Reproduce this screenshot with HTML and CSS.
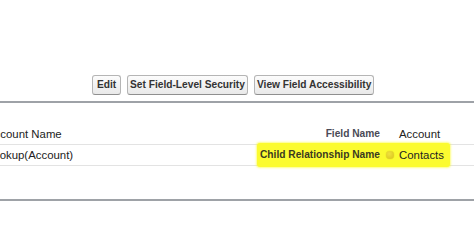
FILE: index.html
```html
<!DOCTYPE html>
<html>
<head>
<meta charset="utf-8">
<link rel="stylesheet" href="styles.css">
</head>
<body>
<div class="page">
  <div class="toolbar">
    <button class="btn">Edit</button>
    <button class="btn">Set Field-Level Security</button>
    <button class="btn">View Field Accessibility</button>
  </div>
  <div class="section">
    <div class="row head">
      <div class="cell left">Account Name</div>
      <div class="cell label">Field Name</div>
      <div class="cell orb-cell"></div>
      <div class="cell value">Account</div>
    </div>
    <div class="row data">
      <span class="highlight"></span>
      <div class="cell left">Lookup(Account)</div>
      <div class="cell label">Child Relationship Name</div>
      <div class="cell orb-cell"><span class="orb"></span></div>
      <div class="cell value">Contacts</div>
    </div>
  </div>
  <div class="bottom-rule"></div>
</div>
</body>
</html>
```
FILE: styles.css
```css
html, body {
  margin: 0;
  padding: 0;
  background: #ffffff;
}
.page {
  width: 474px;
  height: 248px;
  overflow: hidden;
  font-family: "Liberation Sans", Arial, sans-serif;
  color: #222222;
}
.toolbar {
  display: flex;
  gap: 6px;
  padding: 75px 0 0 92px;
  height: 20px;
}
.btn {
  box-sizing: border-box;
  height: 20px;
  min-width: 29px;
  padding: 0 2px;
  margin: 0;
  font-family: "Liberation Sans", Arial, sans-serif;
  font-size: 10.2px;
  font-weight: bold;
  color: #333333;
  line-height: 18px;
  background: linear-gradient(#fcfcfc, #e9e9e9);
  border: 1px solid #b5b5b5;
  border-bottom-color: #8f8f8f;
  border-radius: 3px;
  white-space: nowrap;
}
.section {
  margin-top: 6px;
  border-top: 2px solid #9ea2a7;
  padding-top: 20px;
}
.row {
  position: relative;
  display: flex;
  height: 20px;
  border-bottom: 1px solid #e3e3e3;
  font-size: 11.4px;
  line-height: 20px;
}
.row.head {
  padding-top: 1px;
}
.cell {
  position: relative;
  z-index: 1;
  white-space: nowrap;
}
.left {
  flex: 1;
  margin-left: -13px;
}
.label {
  width: 140px;
  text-align: right;
  font-size: 10.2px;
  font-weight: bold;
  color: #4a4a56;
}
.data .label {
  color: #3a3a20;
}
.orb-cell {
  width: 19px;
  display: flex;
  align-items: center;
  justify-content: center;
}
.orb {
  width: 8px;
  height: 8px;
  border-radius: 50%;
  background: radial-gradient(circle at 40% 35%, #f0e23e, #d8c21a);
  box-shadow: 0 0 1px 0 #c8b418;
}
.value {
  width: 75px;
}
.highlight {
  position: absolute;
  left: 257px;
  top: -2px;
  width: 193px;
  height: 24px;
  background: #fbfb30;
  border-radius: 3px;
  box-shadow: 0 0 2px 1px rgba(251, 251, 48, 0.6);
  z-index: 0;
}
.bottom-rule {
  margin-top: 33px;
  border-top: 2px solid #9ea2a7;
}
```
